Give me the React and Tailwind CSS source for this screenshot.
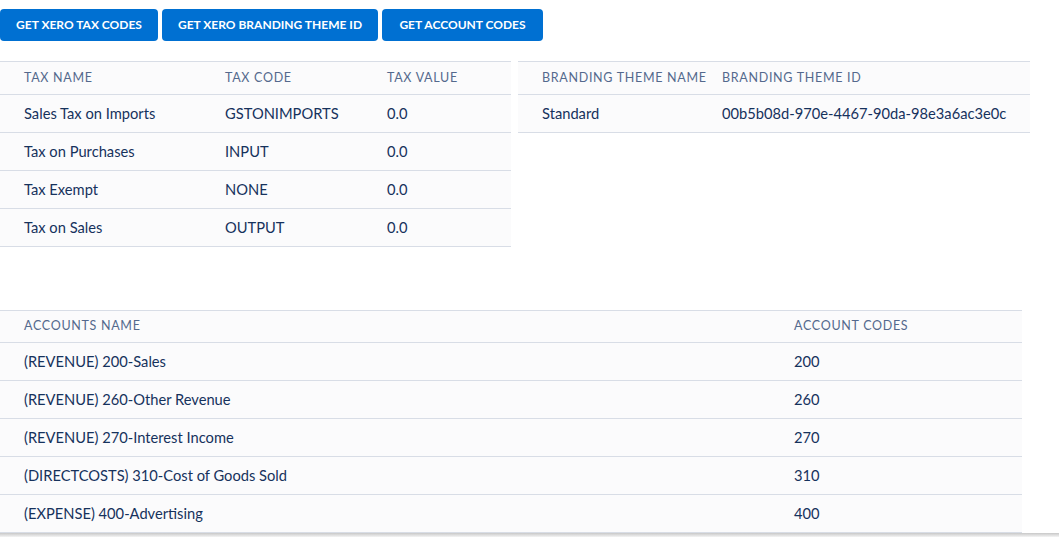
import React from "react";

const font = { fontFamily: '"Lato", "Open Sans", sans-serif' };

function Btn({ children, w }) {
  return (
    <button className={`h-8 rounded-[4px] bg-[#0070d2] text-white text-[12px] font-bold whitespace-nowrap flex items-center justify-center ${w}`}>
      {children}
    </button>
  );
}

function Th({ children, w, first }) {
  return (
    <div className={`${w} ${first ? "pl-6" : "pl-2"} pr-2 text-[12.5px] uppercase tracking-[0.7px] text-[#54698d] flex items-center whitespace-nowrap`}>
      {children}
    </div>
  );
}

function Td({ children, w, first }) {
  return (
    <div className={`${w} ${first ? "pl-6" : "pl-2"} pr-2 text-[14.7px] text-[#16325c] flex items-center whitespace-nowrap`}>
      {children}
    </div>
  );
}

const taxRows = [
  ["Sales Tax on Imports", "GSTONIMPORTS", "0.0"],
  ["Tax on Purchases", "INPUT", "0.0"],
  ["Tax Exempt", "NONE", "0.0"],
  ["Tax on Sales", "OUTPUT", "0.0"],
];

const accRows = [
  ["(REVENUE) 200-Sales", "200"],
  ["(REVENUE) 260-Other Revenue", "260"],
  ["(REVENUE) 270-Interest Income", "270"],
  ["(DIRECTCOSTS) 310-Cost of Goods Sold", "310"],
  ["(EXPENSE) 400-Advertising", "400"],
];

export default function App() {
  return (
    <div className="w-[1059px] h-[537px] overflow-hidden bg-white flex flex-col" style={font}>
      <div className="flex gap-1 pt-[9px]">
        <Btn w="w-[158px]">GET XERO TAX CODES</Btn>
        <Btn w="w-[216px]">GET XERO BRANDING THEME ID</Btn>
        <Btn w="w-[161px]">GET ACCOUNT CODES</Btn>
      </div>

      <div className="flex items-start mt-[20px]">
        <div className="w-[511px] bg-[#fbfbfc] border-t border-[#d8dde6]">
          <div className="flex h-[33px] border-b border-[#d8dde6]">
            <Th w="w-[217px]" first>Tax Name</Th>
            <Th w="w-[162px]">Tax Code</Th>
            <Th w="w-[132px]">Tax Value</Th>
          </div>
          {taxRows.map((r) => (
            <div key={r[0]} className="flex h-[38px] border-b border-[#d8dde6]">
              <Td w="w-[217px]" first>{r[0]}</Td>
              <Td w="w-[162px]">{r[1]}</Td>
              <Td w="w-[132px]">{r[2]}</Td>
            </div>
          ))}
        </div>
        <div className="ml-[7px] w-[512px] bg-[#fbfbfc] border-t border-[#d8dde6]">
          <div className="flex h-[33px] border-b border-[#d8dde6]">
            <Th w="w-[196px]" first>Branding Theme Name</Th>
            <Th w="w-[316px]">Branding Theme ID</Th>
          </div>
          <div className="flex h-[38px] border-b border-[#d8dde6]">
            <Td w="w-[196px]" first>Standard</Td>
            <Td w="w-[316px]">00b5b08d-970e-4467-90da-98e3a6ac3e0c</Td>
          </div>
        </div>
      </div>

      <div className="mt-[63px] w-[1022px] bg-[#fbfbfc] border-t border-[#d8dde6]">
        <div className="flex h-[32px] border-b border-[#d8dde6]">
          <Th w="w-[786px]" first>Accounts Name</Th>
          <Th w="w-[236px]">Account Codes</Th>
        </div>
        {accRows.map((r) => (
          <div key={r[0]} className="flex h-[38px] border-b border-[#d8dde6]">
            <Td w="w-[786px]" first>{r[0]}</Td>
            <Td w="w-[236px]">{r[1]}</Td>
          </div>
        ))}
      </div>
      <div className="h-[6px] bg-gradient-to-b from-[#c8c8c8] to-[#f4f4f4]" />
    </div>
  );
}
